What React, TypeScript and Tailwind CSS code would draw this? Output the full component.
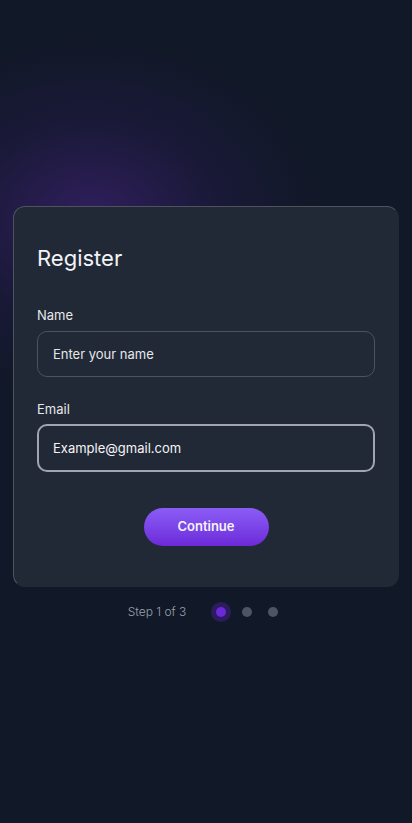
import { useState } from "react";

const StepDots = ({ current, total }: { current: number; total: number }) => (
  <div className="flex items-center gap-4">
    {Array.from({ length: total }).map((_, i) => (
      <span
        key={i}
        className={
          i === current
            ? "h-2.5 w-2.5 rounded-full bg-[#6d28d9] ring-[5px] ring-[#6d28d9]/30"
            : "h-2.5 w-2.5 rounded-full bg-[#4b5563]"
        }
      />
    ))}
  </div>
);

export default function App() {
  const [name, setName] = useState<string>("");
  const [email, setEmail] = useState<string>("Example@gmail.com");

  return (
    <div
      className="relative flex min-h-screen flex-col items-center justify-center overflow-hidden bg-[#111827] px-[13px] pt-[5px]"
      style={{ fontFamily: "Inter, 'Noto Sans', sans-serif" }}
    >
      <div className="pointer-events-none absolute left-[-140px] top-[40px] h-[360px] w-[460px] rounded-full bg-[radial-gradient(closest-side,rgba(70,35,130,0.6),rgba(45,28,95,0.3)_55%,transparent)]" />

      <section className="relative w-full rounded-xl border border-transparent border-l-white/20 border-t-white/20 bg-[#222936] px-[23px] pb-10 pt-[37px]">
        <h1 className="text-[22px] font-normal leading-7 text-gray-100">Register</h1>

        <label className="mt-[33px] block text-[13px] leading-5 text-gray-200">Name</label>
        <input
          value={name}
          onChange={(e) => setName(e.target.value)}
          placeholder="Enter your name"
          className="mt-[6px] h-[46px] w-full rounded-[10px] border border-[#4b5260] bg-transparent px-[15px] text-[13px] text-gray-100 outline-none placeholder:text-gray-200"
        />

        <label className="mt-[22px] block text-[13px] leading-5 text-gray-200">Email</label>
        <input
          value={email}
          onChange={(e) => setEmail(e.target.value)}
          className="mt-[5px] h-[48px] w-full rounded-[10px] border-2 border-[#a1a5ad] bg-transparent px-[14px] text-[13px] text-gray-100 outline-none"
        />

        <div className="mt-9 flex justify-center">
          <button
            type="button"
            className="h-[38px] w-[125px] rounded-full bg-gradient-to-b from-[#8b5cf6] to-[#6d28d9] text-[13px] font-semibold text-gray-100"
          >
            Continue
          </button>
        </div>
      </section>

      <div className="relative mt-[15px] flex h-5 items-center gap-[30px] pr-[6px]">
        <span className="text-[12px] font-light text-gray-400">Step 1 of 3</span>
        <StepDots current={0} total={3} />
      </div>
    </div>
  );
}
